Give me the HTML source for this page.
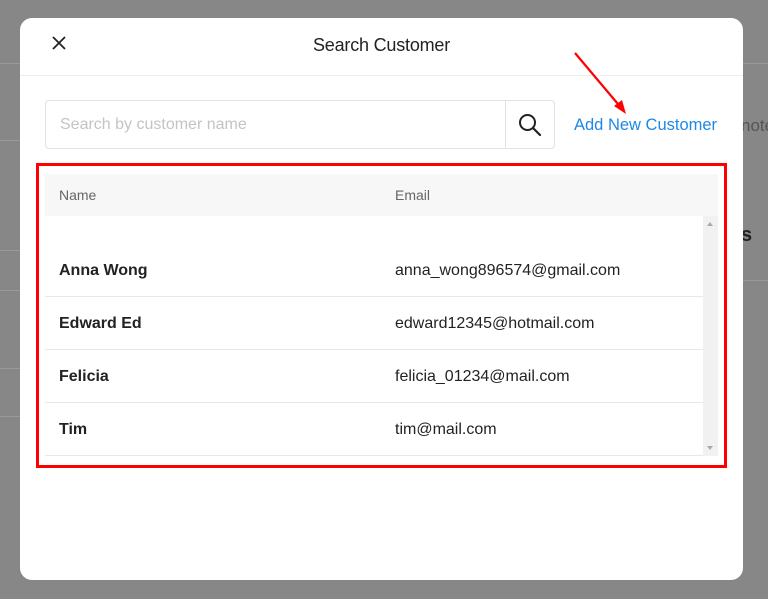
<!DOCTYPE html>
<html><head><meta charset="utf-8"><style>
*{margin:0;padding:0;box-sizing:border-box}
body{width:768px;height:599px;background:#878787;position:relative;overflow:hidden;font-family:"Liberation Sans",sans-serif}
.abs{position:absolute}
.line{position:absolute;left:0;width:20px;height:1px;background:#9a9a9a}
</style></head><body>
<div class="line" style="top:63px"></div>
<div class="line" style="top:140px"></div>
<div class="line" style="top:250px"></div>
<div class="line" style="top:290px"></div>
<div class="line" style="top:368px"></div>
<div class="line" style="top:416px"></div>
<div class="abs" style="left:743px;top:63px;width:25px;height:1px;background:#9a9a9a"></div>
<div class="abs" style="left:743px;top:280px;width:25px;height:1px;background:#9a9a9a"></div>
<div class="abs" style="left:741px;top:116px;font-size:17px;color:#555">note</div>
<div class="abs" style="left:741px;top:224px;font-size:20px;color:#222;font-weight:bold">s</div>

<div class="abs" style="left:20px;top:18px;width:723px;height:562px;background:#fff;border-radius:12px;overflow:hidden">
  <div class="abs" style="left:0;top:57px;width:723px;height:1px;background:#eee"></div>
  <svg class="abs" style="left:32px;top:18px" width="14" height="14" viewBox="0 0 14 14"><path d="M1 1L13 13M13 1L1 13" stroke="#222" stroke-width="1.8"/></svg>
  <div class="abs" style="left:0;top:17px;width:723px;text-align:center;font-size:18px;color:#222;letter-spacing:-0.2px">Search Customer</div>
  <div class="abs" style="left:25px;top:82px;width:510px;height:49px;border:1px solid #e2e2e2;border-radius:4px">
    <div class="abs" style="left:14px;top:15px;font-size:16px;color:#c4c4c4">Search by customer name</div>
    <div class="abs" style="left:459px;top:0;width:1px;height:47px;background:#e2e2e2"></div>
    <svg class="abs" style="left:471px;top:11px" width="26" height="26" viewBox="0 0 26 26"><circle cx="10.5" cy="10.5" r="7.5" fill="none" stroke="#222" stroke-width="2"/><path d="M16 16L23 23" stroke="#222" stroke-width="2.2" stroke-linecap="round"/></svg>
  </div>
  <div class="abs" style="left:554px;top:98px;font-size:16.5px;color:#1e88e5">Add New Customer</div>
  <div class="abs" style="left:25px;top:156px;width:673px;height:42px;background:#f7f7f7">
    <div class="abs" style="left:14px;top:13px;font-size:14px;color:#666">Name</div>
    <div class="abs" style="left:350px;top:13px;font-size:14px;color:#666">Email</div>
  </div>
  <div class="abs" style="left:683px;top:198px;width:15px;height:240px;background:#f1f1f1"></div>
  <div class="abs" style="left:687px;top:204px;width:0;height:0;border-left:3.5px solid transparent;border-right:3.5px solid transparent;border-bottom:4px solid #aaa"></div>
  <div class="abs" style="left:687px;top:428px;width:0;height:0;border-left:3.5px solid transparent;border-right:3.5px solid transparent;border-top:4px solid #aaa"></div>
  <div style="position:absolute;left:25px;top:198px;width:658px;font-size:16px;color:#222">
    <div style="height:81px;border-bottom:1px solid #e8e8e8;position:relative"><span class="abs" style="left:14px;top:46px;font-weight:bold">Anna Wong</span><span class="abs" style="left:350px;top:46px">anna_wong896574@gmail.com</span></div>
    <div style="height:53px;border-bottom:1px solid #e8e8e8;position:relative"><span class="abs" style="left:14px;top:18px;font-weight:bold">Edward Ed</span><span class="abs" style="left:350px;top:18px">edward12345@hotmail.com</span></div>
    <div style="height:53px;border-bottom:1px solid #e8e8e8;position:relative"><span class="abs" style="left:14px;top:18px;font-weight:bold">Felicia</span><span class="abs" style="left:350px;top:18px">felicia_01234@mail.com</span></div>
    <div style="height:53px;border-bottom:1px solid #e8e8e8;position:relative"><span class="abs" style="left:14px;top:18px;font-weight:bold">Tim</span><span class="abs" style="left:350px;top:18px">tim@mail.com</span></div>
  </div>
  <div class="abs" style="left:16px;top:145px;width:691px;height:305px;border:3px solid #f00"></div>
  <svg class="abs" style="left:550px;top:30px" width="60" height="70" viewBox="0 0 60 70"><path d="M5 5L53 62" stroke="#f00" stroke-width="2.2"/><path d="M56 66L44 58L52 52Z" fill="#f00"/></svg>
</div>
</body></html>
